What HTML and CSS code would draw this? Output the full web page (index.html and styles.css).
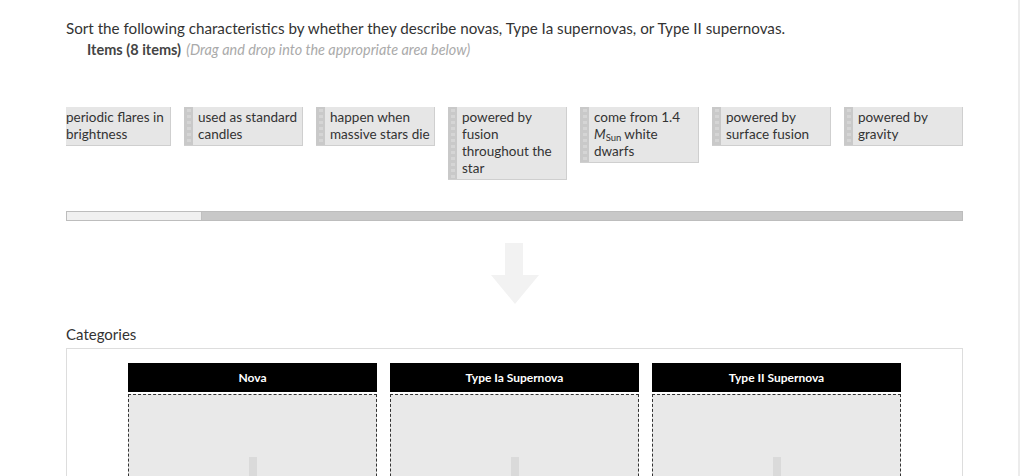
FILE: index.html
```html
<!DOCTYPE html>
<html lang="en">
<head>
    <meta charset="UTF-8">
    <meta name="viewport" content="width=device-width, initial-scale=1.0">
    <title>Sorting: Novas and Supernovas</title>
    <link rel="stylesheet" href="styles.css">
</head>
<body>

    <div class="page">
        <!-- Question prompt -->
        <p class="prompt">Sort the following characteristics by whether they describe novas, Type Ia supernovas, or Type II supernovas.</p>
        <div class="items-label">
            <span class="items-count">Items (8 items)</span>
            <span class="items-hint">(Drag and drop into the appropriate area below)</span>
        </div>

        <!-- Draggable items -->
        <div class="item-row">
            <div class="item item-first"><div class="item-text">periodic flares in brightness</div></div>
            <div class="item"><span class="grip"></span><div class="item-text">used as standard candles</div></div>
            <div class="item"><span class="grip"></span><div class="item-text">happen when massive stars die</div></div>
            <div class="item"><span class="grip"></span><div class="item-text">powered by fusion throughout the star</div></div>
            <div class="item"><span class="grip"></span><div class="item-text">come from 1.4 <span class="mass"><i>M</i><sub>Sun</sub></span>white dwarfs</div></div>
            <div class="item"><span class="grip"></span><div class="item-text">powered by surface fusion</div></div>
            <div class="item"><span class="grip"></span><div class="item-text">powered by gravity</div></div>
        </div>

        <!-- Scroll track for the item row -->
        <div class="track">
            <div class="track-thumb"></div>
        </div>

        <div class="drop-arrow">
            <svg width="48" height="61" viewBox="0 0 48 61">
                <polygon points="14,0 32,0 32,32 48,32 24,61 0,32 14,32" fill="#f2f2f2"/>
            </svg>
        </div>

        <!-- Categories -->
        <h3 class="categories-title">Categories</h3>
        <div class="categories">
            <div class="category">
                <div class="category-head">Nova</div>
                <div class="category-zone"><span class="zone-arrow"></span></div>
            </div>
            <div class="category">
                <div class="category-head">Type Ia Supernova</div>
                <div class="category-zone"><span class="zone-arrow"></span></div>
            </div>
            <div class="category">
                <div class="category-head">Type II Supernova</div>
                <div class="category-zone"><span class="zone-arrow"></span></div>
            </div>
        </div>
    </div>

</body>
</html>
```

FILE: styles.css
```css
html, body {
    margin: 0;
    padding: 0;
    background-color: #ffffff;
    overflow: hidden;
}

body {
    font-family: 'Lato', 'Liberation Sans', sans-serif;
    color: #333333;
}

.page {
    width: 1020px;
    height: 476px;
    border-right: 2px solid #ececec;
    padding: 18px 0 0 66px;
    box-sizing: border-box;
    overflow: hidden;
}

.prompt {
    margin: 0;
    font-size: 15.2px;
    line-height: 20px;
}

.items-label {
    margin: 2px 0 0 21px;
    line-height: 18px;
}

.items-count {
    font-size: 14.5px;
    font-weight: 700;
    color: #444444;
}

.items-hint {
    font-size: 14.4px;
    font-style: italic;
    color: #aaaaaa;
    margin-left: 1px;
}

.item-row {
    display: flex;
    align-items: flex-start;
    gap: 13px;
    margin-top: 48px;
    height: 71px;
    width: 897px;
}

.item {
    display: flex;
    width: 119px;
    box-sizing: border-box;
    background-color: #e6e6e6;
    border-right: 1px solid #cfcfcf;
    border-bottom: 1px solid #cfcfcf;
}

.item-first {
    width: 105px;
}

.grip {
    flex: 0 0 9px;
    background-color: #c9c9c9;
    background-image: repeating-linear-gradient(to bottom, #c9c9c9 0, #c9c9c9 2px, #d5d5d5 2px, #d5d5d5 5px, #c9c9c9 5px, #c9c9c9 6px);
    background-size: 4px 100%;
    background-position: center top;
    background-repeat: no-repeat;
}

.item-text {
    padding: 2px 4px 2px 5px;
    font-size: 13.5px;
    line-height: 17px;
    color: #333333;
}

.item-first .item-text {
    padding-left: 0;
}

.mass {
    display: inline-block;
    margin-right: 3px;
}

.mass sub {
    font-size: 9.5px;
    line-height: 0;
    vertical-align: -2px;
}

.track {
    width: 897px;
    height: 10px;
    margin-top: 33px;
    background-color: #c8c8c8;
    border: 1px solid #bdbdbd;
    box-sizing: border-box;
}

.track-thumb {
    width: 134px;
    height: 100%;
    background-color: #f0f0f0;
    border-right: 1px solid #c0c0c0;
}

.drop-arrow {
    width: 897px;
    display: flex;
    justify-content: center;
    margin-top: 22px;
    height: 61px;
}

.categories-title {
    margin: 20px 0 0 0;
    font-size: 15px;
    font-weight: 400;
    line-height: 20px;
    color: #333333;
}

.categories {
    width: 897px;
    height: 200px;
    margin-top: 4px;
    border: 1px solid #dddddd;
    box-sizing: border-box;
    display: flex;
    justify-content: center;
    gap: 13px;
    padding-top: 14px;
}

.category {
    width: 249px;
}

.category-head {
    height: 29px;
    background-color: #000000;
    color: #ffffff;
    font-size: 12px;
    font-weight: 700;
    line-height: 29px;
    text-align: center;
}

.category-zone {
    margin-top: 2px;
    height: 160px;
    background-color: #e9e9e9;
    border: 1px dashed #333333;
    display: flex;
    justify-content: center;
}

.zone-arrow {
    width: 8px;
    height: 40px;
    margin-top: 62px;
    background-color: #dadada;
}
```
